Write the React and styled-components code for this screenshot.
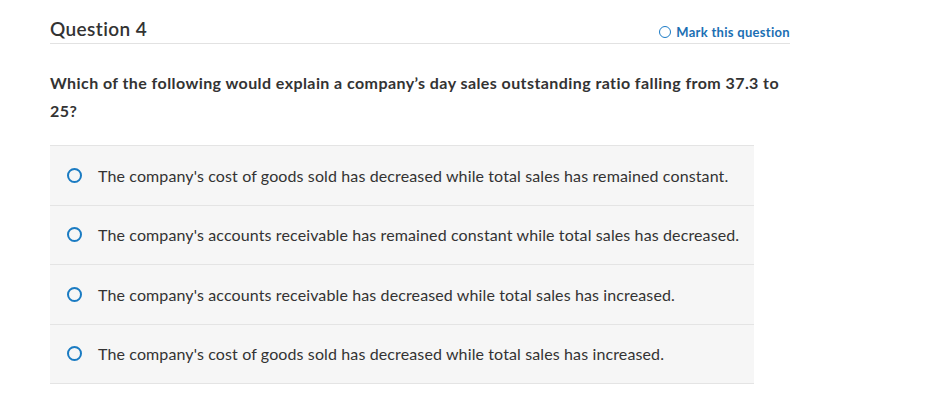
import React from "react";
import styled, { createGlobalStyle } from "styled-components";

const Global = createGlobalStyle`
  html, body { margin: 0; padding: 0; background: #fff; }
  body { font-family: Lato, "Open Sans", sans-serif; color: #333; }
`;

const Page = styled.div`
  padding: 16px 0 0 50px;
  width: 740px;
`;

const Header = styled.div`
  display: flex;
  align-items: center;
  justify-content: space-between;
  height: 27px;
  border-bottom: 1px solid #e2e2e2;
`;

const Title = styled.h2`
  margin: -2px 0 0;
  font-size: 19px;
  font-weight: 600;
  color: #333;
  letter-spacing: 0.4px;
  line-height: 24px;
`;

const MarkButton = styled.button`
  display: flex;
  align-items: center;
  gap: 5px;
  background: none;
  border: none;
  padding: 0;
  margin-top: 4px;
  font-family: inherit;
  font-size: 13px;
  font-weight: 700;
  letter-spacing: 0.3px;
  color: #1b6fb3;
  cursor: pointer;
`;

const SmallRing = styled.span`
  box-sizing: border-box;
  width: 12px;
  height: 12px;
  border: 1.5px solid #1b7bc6;
  border-radius: 50%;
`;

const Prompt = styled.p`
  margin: 25px 0 0;
  font-size: 16px;
  font-weight: 700;
  letter-spacing: 0.42px;
  line-height: 28px;
  color: #333;
  width: 740px;
`;

const Options = styled.div`
  margin-top: 20px;
  width: 704px;
  border-top: 1px solid #e4e4e4;
`;

const Option = styled.label`
  display: flex;
  align-items: center;
  height: 58.5px;
  background: #f6f6f6;
  border-bottom: 1px solid #e4e4e4;
  cursor: pointer;
`;

const Ring = styled.span`
  box-sizing: border-box;
  width: 15px;
  height: 15px;
  margin-left: 17px;
  margin-right: 16px;
  border: 2.5px solid #1a7bc2;
  border-radius: 50%;
  flex-shrink: 0;
`;

const OptionText = styled.span`
  font-size: 16px;
  letter-spacing: 0.12px;
  color: #333;
`;

const answers = [
  "The company's cost of goods sold has decreased while total sales has remained constant.",
  "The company's accounts receivable has remained constant while total sales has decreased.",
  "The company's accounts receivable has decreased while total sales has increased.",
  "The company's cost of goods sold has decreased while total sales has increased.",
];

export default function App() {
  return (
    <>
      <Global />
      <Page>
        <Header>
          <Title>Question 4</Title>
          <MarkButton>
            <SmallRing />
            Mark this question
          </MarkButton>
        </Header>
        <Prompt>
          Which of the following would explain a company’s day sales outstanding ratio falling from 37.3 to 25?
        </Prompt>
        <Options>
          {answers.map((a) => (
            <Option key={a}>
              <Ring />
              <OptionText>{a}</OptionText>
            </Option>
          ))}
        </Options>
      </Page>
    </>
  );
}
